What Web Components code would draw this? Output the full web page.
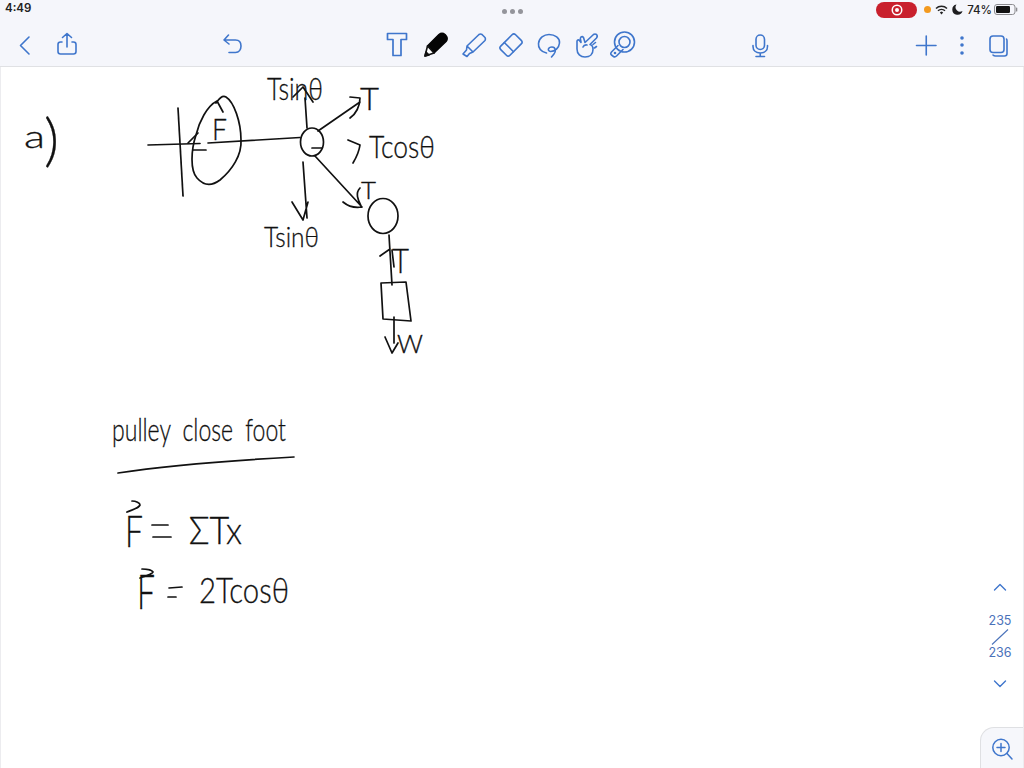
<!DOCTYPE html>
<html lang="en"><head><meta charset="utf-8"><title>Notes</title>
<style>
html,body{margin:0;padding:0;background:#fff}
body{width:1024px;height:768px;overflow:hidden;font-family:"Inter","Liberation Sans",sans-serif}
</style></head>
<body>
<note-app>
  <status-bar slot="top"></status-bar>
  <tool-bar slot="top">
    <tool-icon name="back" style="margin-left:9px"></tool-icon>
    <tool-icon name="share" style="margin-left:10px"></tool-icon>
    <tool-icon name="undo" style="margin-left:133px"></tool-icon>
    <tool-icon name="text" style="margin-left:133px"></tool-icon>
    <tool-icon name="pen" style="margin-left:7px"></tool-icon>
    <tool-icon name="marker" style="margin-left:6px"></tool-icon>
    <tool-icon name="eraser" style="margin-left:5px"></tool-icon>
    <tool-icon name="lasso" style="margin-left:6px"></tool-icon>
    <tool-icon name="hand" style="margin-left:5px"></tool-icon>
    <tool-icon name="lens" style="margin-left:4px"></tool-icon>
    <tool-icon name="mic" style="margin-left:106px"></tool-icon>
    <tool-icon name="plus" style="margin-left:134px"></tool-icon>
    <tool-icon name="dots" style="margin-left:4px"></tool-icon>
    <tool-icon name="pages" style="margin-left:4px"></tool-icon>
  </tool-bar>
  <note-page></note-page>
</note-app>
<script>
const ICONS={
back:'<path d="M20 8 11.500 16.500 20 25"/>',
share:'<path d="M11 13H9.500Q7 13 7 15.500V22.500Q7 25 9.500 25H22.500Q25 25 25 22.500V15.500Q25 13 22.500 13H21M16 18V4.500M11.500 8.500 16 4.500 20.500 8.500"/>',
undo:'<path d="M12.500 6 8 11 13 15M8 11H19.500C23 11 25 13.500 25 17S23 23.500 19.500 23.500H13"/>',
text:'<path d="M6.500 4.500H25.500V10.500H20V26.500H12V10.500H6.500Z" stroke-width="1.700"/>',
pen:'<path d="M7.500 17 19 5.500Q22 3 25 5.500L26.500 7.500Q28 10 26 12.500L14 24Z" fill="#050505" stroke="#050505"/><path d="M7.500 17 5 27 14 24Z" fill="#fff" stroke="#111"/><path d="M5 27 6 23 9 26Z" fill="#111" stroke="#111"/>',
marker:'<path d="M9 17 21 5.500Q22.500 4.500 24 5.500L27 8.500Q28 10 27 11.500L15 23ZM9 17 8.500 21 5 25 9 27.500 11.500 24.500 15 23"/>',
eraser:'<g transform="rotate(-45 16 16)"><rect x="5.500" y="9.500" width="21" height="13" rx="2.500"/><path d="M13 9.500V22.500"/></g>',
lasso:'<path d="M13.500 24C8 23 5 19 5.500 14.500 6 9 11 5.500 16 5.500 22 5.500 27 9 26.500 14 26 19 22 22.500 17.500 22.500 14 22 15 18 19 18 23 18 23 23 21 25L18.500 28"/>',
hand:'<path d="M7 12V20C7 25 10.500 28 15 28 20 28 23 25 23 20.500 23 18 22 16 20 15.500L26.500 9Q28 7 26.500 5.500 25 4.500 23.500 5.500L15 13.500 13.500 8.500Q12.500 7 11 8 10 9 10.500 10.500L11 13M7 12Q7.500 10.500 9 11L11 13.500M13 18Q14 15.500 17 16M23 15.500 25.500 13.500M24.500 19 26.500 17.500"/>',
lens:'<circle cx="18.500" cy="13" r="10"/><circle cx="18.500" cy="13" r="5.500"/><path d="M12 16.500 5.500 23Q4 25 5.500 26L7.500 27.500Q9 28.500 10.500 27L17 20.500"/><circle cx="9" cy="24" r="1.300" fill="currentColor" stroke="none"/>',
mic:'<rect x="12" y="6" width="8.500" height="14.500" rx="4.250"/><path d="M9 16.500V17.500C9 21.500 12 24 16.250 24S23.500 21.500 23.500 17.500V16.500M16.250 24V27.500M12 27.500H20.500"/>',
plus:'<path d="M6.500 16.500H26M16.250 7V26"/>',
dots:'<g fill="currentColor" stroke="none"><circle cx="16" cy="9" r="1.800"/><circle cx="16" cy="16" r="1.800"/><circle cx="16" cy="24" r="1.800"/></g>',
pages:'<rect x="8" y="7" width="14" height="16.500" rx="3"/><path d="M24.500 10Q25 10.500 25 12V24.500Q25 27 22.500 27H13.500Q12 27 11 26"/>'
};
function def(name,html,setup){customElements.define(name,class extends HTMLElement{
  constructor(){super();const r=this.attachShadow({mode:'open'});r.innerHTML=html;}
  connectedCallback(){if(setup)setup(this)}
});}
def('tool-icon','<style>:host{display:block;flex:none;width:32px;height:32px;color:#3f76cc}svg{display:block}</style><svg width="32" height="32" viewBox="0 0 32 32" fill="none" stroke="currentColor" stroke-width="1.600" stroke-linecap="round" stroke-linejoin="round"></svg>',
  el=>{el.shadowRoot.querySelector('svg').innerHTML=ICONS[el.getAttribute('name')]||''});
def('status-bar',`<style>
:host{display:flex;align-items:center;height:24px;background:#f5f6fb;color:#222;font:600 11.500px "Inter","Liberation Sans",sans-serif;position:relative}
.time{margin-left:5px;margin-top:-8px}
.grip{position:absolute;left:502px;top:9px;display:flex;gap:3px}
.grip i{width:5px;height:5px;border-radius:50%;background:#94959b}
.right{margin-left:auto;display:flex;align-items:center;margin-right:6px;margin-top:-5px}
.rec{width:41px;height:16px;border-radius:8px;background:#c9202d;display:flex;align-items:center;justify-content:center}
.rec i{width:4px;height:4px;border-radius:50%;background:#fff;border:2px solid #c9202d;box-shadow:0 0 0 1.500px #fff}
.cam{width:7px;height:7px;border-radius:50%;background:#f39a1f;margin-left:7px}
svg{display:block}
.pct{margin-left:4px;font-size:11.500px;font-weight:500}
</style>
<span class="time">4:49</span>
<div class="grip"><i></i><i></i><i></i></div>
<div class="right">
 <div class="rec"><i></i></div><div class="cam"></div>
 <svg style="margin-left:4px" width="13" height="10" viewBox="0 0 13 10" fill="none" stroke="#222" stroke-width="1.500"><path d="M1 3.500C4 .6 9 .6 12 3.500M3 5.800C5 4 8 4 10 5.800"/><path d="M4.800 7.500 6.500 6.400 8.200 7.500 6.500 9.500Z" fill="#222" stroke="none"/></svg>
 <svg style="margin-left:4px" width="11" height="11" viewBox="0 0 11 11"><path d="M4.500.500A5.200 5.200 0 1 0 10.500 7 4.500 4.500 0 0 1 4.500.500Z" fill="#1d1d1f"/></svg>
 <span class="pct">74%</span>
 <svg style="margin-left:2px" width="24" height="11" viewBox="0 0 24 11"><rect x=".5" y=".5" width="20.500" height="10" rx="2.500" fill="none" stroke="#8a8a8e"/><rect x="2" y="2" width="14" height="7" rx="1.200" fill="#111"/><rect x="22" y="3.500" width="1.300" height="4" rx=".6" fill="#8a8a8e"/></svg>
</div>`);
def('tool-bar','<style>:host{display:flex;align-items:center;height:42px;background:#f5f6fb;border-bottom:1px solid #e0e1e4}</style><slot></slot>');
def('page-nav',`<style>
:host{position:absolute;right:0;top:515px;width:46px;display:flex;flex-direction:column;align-items:center;color:#4a72ba;font:12.500px "Inter","Liberation Sans",sans-serif}
svg{display:block}
span{line-height:16px}
</style>
<svg width="16" height="10" viewBox="0 0 16 10" fill="none" stroke="#3f76cc" stroke-width="1.400" stroke-linecap="round" stroke-linejoin="round"><path d="M2.500 8 8 2.500 13.500 8"/></svg>
<span style="margin-top:21px">235</span>
<svg width="18" height="16" viewBox="0 0 18 16" fill="none" stroke="#4a72ba" stroke-width="1.100"><path d="M17 .5 1 15.500"/></svg>
<span>236</span>
<svg style="margin-top:18px" width="16" height="10" viewBox="0 0 16 10" fill="none" stroke="#3f76cc" stroke-width="1.400" stroke-linecap="round" stroke-linejoin="round"><path d="M2.500 2 8 7.500 13.500 2"/></svg>`);
def('zoom-tab',`<style>
:host{position:absolute;right:0;bottom:0;width:43px;height:41px;box-sizing:border-box;background:#f6f7fb;border:1px solid #dfe0e3;border-right:0;border-bottom:0;border-top-left-radius:14px;display:flex;align-items:center;justify-content:center}
svg{display:block;margin-top:1px}
</style><svg width="26" height="26" viewBox="0 0 26 26" fill="none" stroke="#3f76cc" stroke-width="1.500" stroke-linecap="round"><circle cx="12" cy="11.500" r="8.200"/><path d="M12 7.500V15.500M8 11.500H16M18 17.500 23 23" /></svg>`);
def('note-page',`<style>
:host{display:block;position:relative;height:701px;background:#fff;border-left:1px solid #ececef;border-right:1px solid #ececef;box-sizing:border-box;overflow:hidden}
svg.ink{position:absolute;left:-1px;top:-67px}
.s{fill:none;stroke:#111;stroke-width:1.700;stroke-linecap:round;stroke-linejoin:round}
text{font-family:"Lato","Liberation Sans",sans-serif;font-weight:300;fill:#111;stroke:#111;stroke-width:.3}
</style>
<svg class="ink" width="1024" height="768" viewBox="0 0 1024 768">
<g class="s">
<path d="M148 145 200 143.500M208 143 300 137.500"/>
<path d="M178 108 183 196"/>
<path d="M188 143 198 133M193 150H206"/>
<path d="M223 112 217 101C207 106 199 122 196 135 191 150 190 170 197 178 204 186 212 186 220 180 232 170 242 155 241 140 241 122 234 102 226 97 222 95 219 99 216 103"/>
<ellipse cx="312" cy="142" rx="11.500" ry="14"/>
<path d="M312 148H322M305 98 307 128M293 97 303 87 313 102"/>
<path d="M318 131 360 102M350 97 360 98C360 106 356 114 350 118"/>
<path d="M348 140 360 145C359 152 356 158 353 163"/>
<path d="M315 156 362 207M360 188C355 193 358 200 361 206M343 202C349 207 356 208 362 207"/>
<ellipse cx="383" cy="216" rx="15" ry="17.500"/>
<path d="M389 235 392 285M380 256 390 249M392 250 394 267"/>
<path d="M381 283 406 282 411 321 383 319Z"/>
<path d="M394 317V343M385 337 392 353 398 343"/>
<path d="M303 162 307 218M292 202 303 220 308 202"/>
<path d="M118 473C170 465 240 460 294 457"/>
<path d="M132 501C136 501 140 503 140 505 138 509 131 510 127 512"/>
<path d="M152 525H168M153 537H171"/>
<path d="M142 569C146 569 152 570 153 572 151 575 145 576 140 578"/>
<path d="M169 588 182 587M168 597H176"/>
</g>
<text x="24" y="148" font-size="32" textLength="21" lengthAdjust="spacingAndGlyphs">a</text>
<text x="44" y="160" font-size="58" textLength="15" lengthAdjust="spacingAndGlyphs">)</text>
<text x="212" y="140" font-size="30" textLength="15" lengthAdjust="spacingAndGlyphs">F</text>
<text x="267" y="100" font-size="31" textLength="56" lengthAdjust="spacingAndGlyphs">Tsinθ</text>
<text x="360" y="110" font-size="32" textLength="19" lengthAdjust="spacingAndGlyphs">T</text>
<text x="369" y="158" font-size="32" textLength="66" lengthAdjust="spacingAndGlyphs">Tcosθ</text>
<text x="361" y="199" font-size="24" textLength="15" lengthAdjust="spacingAndGlyphs">T</text>
<text x="392" y="273" font-size="33" textLength="17" lengthAdjust="spacingAndGlyphs">T</text>
<text x="397" y="353" font-size="26" textLength="26" lengthAdjust="spacingAndGlyphs">W</text>
<text x="264" y="247" font-size="28" textLength="55" lengthAdjust="spacingAndGlyphs">Tsinθ</text>
<text x="112" y="441" font-size="32" textLength="174" lengthAdjust="spacingAndGlyphs" word-spacing="8">pulley close foot</text>
<text x="125" y="547" font-size="44" textLength="18" lengthAdjust="spacingAndGlyphs">F</text>
<text x="189" y="544" font-size="38" textLength="53" lengthAdjust="spacingAndGlyphs">ΣTx</text>
<text x="137" y="609" font-size="48" textLength="18" lengthAdjust="spacingAndGlyphs">F</text>
<text x="199" y="603" font-size="36" textLength="90" lengthAdjust="spacingAndGlyphs">2Tcosθ</text>
</svg>
<page-nav></page-nav>
<zoom-tab></zoom-tab>`);
def('note-app','<style>:host{display:flex;flex-direction:column;width:1024px;height:768px}</style><slot name="top"></slot><slot></slot>');
</script>
</body></html>
